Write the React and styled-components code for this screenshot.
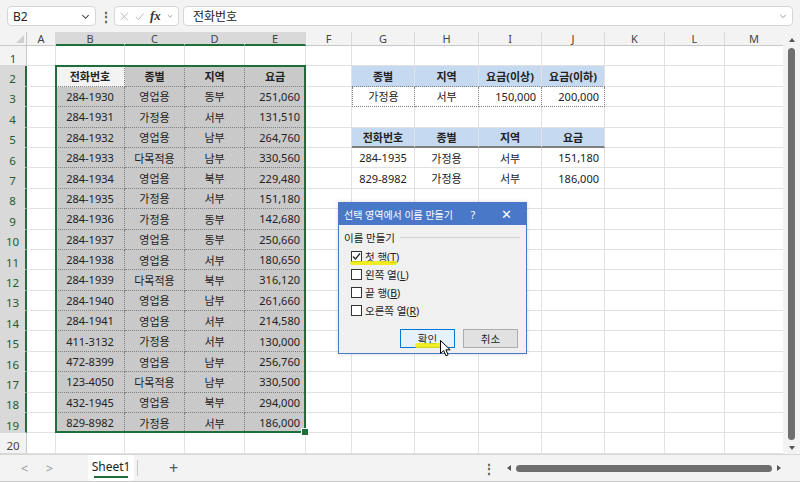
import React from "react";
import styled, { createGlobalStyle, css } from "styled-components";

const GlobalStyle = createGlobalStyle`
  html, body { margin: 0; padding: 0; background: #fff; }
  body { font-family: "Noto Sans", "Noto Sans CJK KR", sans-serif; color: #222; }
  * { box-sizing: border-box; }
`;

const COLS = ["", "A", "B", "C", "D", "E", "F", "G", "H", "I", "J", "K", "L", "M"];
const WIDTHS = [27, 29, 69, 60, 60, 61, 46, 63, 64, 63, 63, 60, 60, 59];
const ROW_H = 20.4;

const left = [
  ["284-1930", "영업용", "동부", "251,060"],
  ["284-1931", "가정용", "서부", "131,510"],
  ["284-1932", "영업용", "남부", "264,760"],
  ["284-1933", "다목적용", "남부", "330,560"],
  ["284-1934", "영업용", "북부", "229,480"],
  ["284-1935", "가정용", "서부", "151,180"],
  ["284-1936", "가정용", "동부", "142,680"],
  ["284-1937", "영업용", "동부", "250,660"],
  ["284-1938", "영업용", "서부", "180,650"],
  ["284-1939", "다목적용", "북부", "316,120"],
  ["284-1940", "영업용", "남부", "261,660"],
  ["284-1941", "영업용", "서부", "214,580"],
  ["411-3132", "가정용", "서부", "130,000"],
  ["472-8399", "영업용", "남부", "256,760"],
  ["123-4050", "다목적용", "남부", "330,500"],
  ["432-1945", "영업용", "북부", "294,000"],
  ["829-8982", "가정용", "서부", "186,000"],
];

// cell map: key "col,row" (col 1..13 = A..M, row 1..20)
const cells = {};
const put = (c, r, props) => { cells[`${c},${r}`] = props; };

["전화번호", "종별", "지역", "요금"].forEach((v, i) =>
  put(2 + i, 2, { v, bold: true, dotted: true, bg: i === 0 ? "#f3f3f3" : "#c9c9c9" })
);
left.forEach((row, ri) =>
  row.forEach((v, i) =>
    put(2 + i, 3 + ri, { v, dotted: true, bg: "#c9c9c9", align: i === 3 ? "right" : "center" })
  )
);

["종별", "지역", "요금(이상)", "요금(이하)"].forEach((v, i) =>
  put(7 + i, 2, { v, bold: true, bg: "#c5d9f1", dotBottom: true })
);
["가정용", "서부", "150,000", "200,000"].forEach((v, i) =>
  put(7 + i, 3, { v, dotted: true, dotLeft: i === 0, align: i >= 2 ? "right" : "center" })
);
["전화번호", "종별", "지역", "요금"].forEach((v, i) =>
  put(7 + i, 5, { v, bold: true, bg: "#c5d9f1", thick: true })
);
[
  ["284-1935", "가정용", "서부", "151,180"],
  ["829-8982", "가정용", "서부", "186,000"],
].forEach((row, ri) =>
  row.forEach((v, i) => put(7 + i, 6 + ri, { v, align: i === 3 ? "right" : "center" }))
);

const Page = styled.div`
  position: relative;
  width: 800px;
  height: 482px;
  overflow: hidden;
  display: flex;
  flex-direction: column;
  background: #f3f3f3;
`;

/* ---------- formula bar ---------- */
const FormulaBar = styled.div`
  height: 32px;
  display: flex;
  align-items: center;
  padding: 0 7px;
  gap: 4px;
  background: #f3f3f3;
`;
const FieldBox = styled.div`
  height: 20px;
  display: flex;
  align-items: center;
  background: #fff;
  border: 1px solid #d6d6d6;
  border-radius: 4px;
  font-size: 12px;
  color: #222;
  width: ${(p) => (p.$w ? `${p.$w}px` : "auto")};
  flex: ${(p) => (p.$grow ? 1 : "none")};
  padding: 0 5px;
  gap: 6px;
`;
const BoxText = styled.span`
  flex: 1;
  padding-left: ${(p) => p.$pl || 0}px;
`;
const VDots = styled.span`
  width: 10px;
  text-align: center;
  font-size: 12px;
  color: #555;
  font-weight: 700;
`;
const FxText = styled.span`
  font-family: "Liberation Serif", serif;
  font-style: italic;
  font-weight: 700;
  font-size: 13px;
  color: #333;
`;

const Chevron = ({ color = "#444", size = 9 }) => (
  <svg width={size} height={size} viewBox="0 0 10 10">
    <path d="M1.5 3.5 L5 7 L8.5 3.5" fill="none" stroke={color} strokeWidth="1.2" />
  </svg>
);

/* ---------- sheet ---------- */
const SheetArea = styled.div`
  display: flex;
  height: 422px;
`;
const Grid = styled.div`
  display: grid;
  grid-template-columns: ${WIDTHS.map((w) => `${w}px`).join(" ")};
  grid-template-rows: 14px repeat(20, ${ROW_H}px);
  background: #fff;
  font-size: 11px;
  overflow: hidden;
`;
const place = css`
  grid-column: ${(p) => p.$c + 1};
  grid-row: ${(p) => p.$r + 1};
`;
const ColHead = styled.div`
  ${place}
  display: flex;
  align-items: center;
  justify-content: center;
  font-size: 11px;
  line-height: 11px;
  color: #444;
  background: ${(p) => (p.$sel ? "#d9d9d9" : "#f3f3f3")};
  border-right: 1px solid #d9d9d9;
  border-bottom: ${(p) => (p.$sel ? "2px solid #1e6e3c" : "1px solid #c8c8c8")};
  position: relative;
`;
const Corner = styled(ColHead)`
  border-right: 1px solid #c8c8c8;
  &::after {
    content: "";
    position: absolute;
    right: 2px;
    bottom: 2px;
    border-left: 8px solid transparent;
    border-bottom: 8px solid #cfcfcf;
  }
`;
const RowHead = styled.div`
  ${place}
  display: flex;
  align-items: center;
  justify-content: center;
  padding-top: 5px;
  font-size: 11.5px;
  color: #444;
  background: ${(p) => (p.$sel ? "#d9d9d9" : "#f3f3f3")};
  border-bottom: 1px solid #d9d9d9;
  border-right: ${(p) => (p.$sel ? "2px solid #1e6e3c" : "1px solid #c8c8c8")};
  ${(p) => p.$sel && css`color: #1e5a32;`}
`;
const Cell = styled.div`
  ${place}
  display: flex;
  align-items: center;
  justify-content: ${(p) =>
    p.$align === "right" ? "flex-end" : p.$align === "left" ? "flex-start" : "center"};
  padding: 0 5px;
  white-space: nowrap;
  overflow: hidden;
  font-weight: ${(p) => (p.$bold ? 700 : 400)};
  background: ${(p) => p.$bg || "#fff"};
  border-right: 1px solid #e1e1e1;
  border-bottom: 1px solid #e1e1e1;
  ${(p) => p.$dotted && css`
    border-right: 1px dotted #808080;
    border-bottom: 1px dotted #808080;
  `}
  ${(p) => p.$dotBottom && css`border-bottom: 1px dotted #808080;`}
  ${(p) => p.$dotLeft && css`border-left: 1px dotted #808080;`}
  ${(p) => p.$thick && css`border-bottom: 2px solid #7f7f7f;`}
`;
const Selection = styled.div`
  grid-column: 3 / 7;
  grid-row: 3 / 21;
  margin: -1px 0 0 -1px;
  border: 2px solid #1e6e3c;
  pointer-events: none;
  position: relative;
  z-index: 2;
  &::after {
    content: "";
    position: absolute;
    right: -5px;
    bottom: -5px;
    width: 6px;
    height: 6px;
    background: #1e6e3c;
    border: 1px solid #fff;
  }
`;

const VScroll = styled.div`
  width: 17px;
  display: flex;
  flex-direction: column;
  align-items: center;
  padding: 4px 0 2px;
  gap: 4px;
  background: #f3f3f3;
`;
const VThumb = styled.div`
  flex: 1;
  width: 7px;
  border-radius: 4px;
  background: #6e6e6e;
`;

/* ---------- tab bar ---------- */
const TabBar = styled.div`
  height: 28px;
  display: flex;
  align-items: center;
  background: #f3f3f3;
  border-top: 1px solid #d6d6d6;
  border-bottom: 1px solid #c8c8c8;
  font-size: 12px;
`;
const NavArrow = styled.span`
  width: 25px;
  text-align: center;
  color: #999;
  font-size: 13px;
  margin-left: ${(p) => p.$ml || 0}px;
`;
const Tab = styled.div`
  margin-left: 26px;
  width: 46px;
  height: 26px;
  margin-top: -1px;
  background: #fff;
  border-radius: 0 0 4px 4px;
  display: flex;
  flex-direction: column;
  align-items: center;
  justify-content: center;
  color: #222;
  gap: 1px;
`;
const TabLine = styled.div`
  width: 34px;
  height: 2px;
  background: #1e6e3c;
`;
const TabSep = styled.div`
  width: 1px;
  height: 16px;
  background: #c8c8c8;
  margin-left: 3px;
`;
const Plus = styled.span`
  margin-left: 31px;
  font-size: 16px;
  color: #555;
`;
const HScroll = styled.div`
  margin-left: auto;
  margin-right: 17px;
  width: 300px;
  display: flex;
  align-items: center;
  gap: 3px;
`;
const Spacer = styled.span`
  width: ${(p) => p.$w}px;
`;
const HThumb = styled.div`
  flex: 1;
  height: 7px;
  border-radius: 4px;
  background: #6e6e6e;
`;

const Tri = ({ dir }) => {
  const d = {
    up: "M1 6 L4 2 L7 6 Z",
    down: "M1 2 L4 6 L7 2 Z",
    left: "M6 1 L2 4 L6 7 Z",
    right: "M2 1 L6 4 L2 7 Z",
  }[dir];
  return (
    <svg width="8" height="8" viewBox="0 0 8 8">
      <path d={d} fill="#555" />
    </svg>
  );
};

/* ---------- dialog ---------- */
const Dialog = styled.div`
  position: absolute;
  left: 338px;
  top: 202px;
  width: 189px;
  height: 152px;
  background: #f0f0f0;
  border: 1px solid #4a78c8;
  display: flex;
  flex-direction: column;
  z-index: 5;
  box-shadow: 0 0 4px rgba(0, 0, 0, 0.15);
`;
const TitleBar = styled.div`
  height: 22px;
  background: #4a78c8;
  color: #fff;
  display: flex;
  align-items: center;
  padding-left: 5px;
  font-size: 10px;
  white-space: nowrap;
`;
const TitleText = styled.span`
  flex: 1;
`;
const TitleBtn = styled.span`
  width: ${(p) => p.$w}px;
  text-align: center;
  font-size: ${(p) => p.$fs || 11}px;
`;
const DialogBody = styled.div`
  flex: 1;
  padding: 5px 6px 0 5px;
  display: flex;
  flex-direction: column;
  font-size: 10.5px;
  color: #222;
`;
const GroupLabel = styled.div`
  display: flex;
  align-items: center;
  gap: 5px;
  &::after {
    content: "";
    flex: 1;
    height: 1px;
    background: #d4d4d4;
  }
`;
const Options = styled.div`
  display: flex;
  flex-direction: column;
  gap: 3px;
  padding: 4px 0 0 7px;
`;
const Option = styled.div`
  height: 15px;
  display: flex;
  align-items: center;
  gap: 3px;
`;
const CheckBox = styled.span`
  width: 11px;
  height: 11px;
  border: 1px solid #333;
  background: #fff;
  display: inline-flex;
  align-items: center;
  justify-content: center;
`;
const Buttons = styled.div`
  margin-top: auto;
  margin-bottom: 5px;
  display: flex;
  justify-content: flex-end;
  gap: 8px;
  padding-right: 2px;
`;
const Button = styled.div`
  width: 55px;
  height: 19px;
  display: flex;
  align-items: center;
  justify-content: center;
  font-size: 10.5px;
  background: ${(p) => (p.$primary ? "#e5f1fb" : "#e1e1e1")};
  border: 1px solid ${(p) => (p.$primary ? "#0078d7" : "#adadad")};
`;
const Marker = styled.div`
  position: absolute;
  background: rgba(240, 236, 0, 0.85);
  border-radius: 2px;
  z-index: 6;
`;
const Cursor = styled.svg`
  position: absolute;
  left: 440px;
  top: 340px;
  z-index: 7;
`;

const Check = () => (
  <svg width="9" height="9" viewBox="0 0 9 9">
    <path d="M1 4.5 L3.5 7 L8 1.5" fill="none" stroke="#222" strokeWidth="1.3" />
  </svg>
);

const options = [
  ["첫 행(", "T", ")", true],
  ["왼쪽 열(", "L", ")", false],
  ["끝 행(", "B", ")", false],
  ["오른쪽 열(", "R", ")", false],
];

export default function App() {
  const gridItems = [];
  COLS.forEach((c, ci) => {
    const sel = ci >= 2 && ci <= 5;
    gridItems.push(
      ci === 0 ? (
        <Corner key={`h${ci}`} $c={0} $r={0} />
      ) : (
        <ColHead key={`h${ci}`} $c={ci} $r={0} $sel={sel}>{c}</ColHead>
      )
    );
  });
  for (let r = 1; r <= 20; r++) {
    gridItems.push(
      <RowHead key={`r${r}`} $c={0} $r={r} $sel={r >= 2 && r <= 19}>{r}</RowHead>
    );
    for (let c = 1; c <= 13; c++) {
      const p = cells[`${c},${r}`] || {};
      gridItems.push(
        <Cell
          key={`${c},${r}`}
          $c={c}
          $r={r}
          $bg={p.bg}
          $bold={p.bold}
          $align={p.align}
          $dotted={p.dotted}
          $dotBottom={p.dotBottom}
          $dotLeft={p.dotLeft}
          $thick={p.thick}
        >
          {p.v}
        </Cell>
      );
    }
  }

  return (
    <Page>
      <GlobalStyle />
      <FormulaBar>
        <FieldBox $w={89}>
          <BoxText>B2</BoxText>
          <Chevron />
        </FieldBox>
        <VDots>⋮</VDots>
        <FieldBox $w={65}>
          <svg width="11" height="11" viewBox="0 0 11 11">
            <path d="M1 1 L10 10 M10 1 L1 10" stroke="#b0b0b0" strokeWidth="1.1" />
          </svg>
          <svg width="12" height="11" viewBox="0 0 12 11">
            <path d="M1 6 L4.5 9.5 L11 1.5" fill="none" stroke="#b0b0b0" strokeWidth="1.1" />
          </svg>
          <FxText>fx</FxText>
          <Chevron color="#888" size={8} />
        </FieldBox>
        <FieldBox $grow>
          <BoxText $pl={4}>전화번호</BoxText>
          <Chevron color="#999" size={8} />
        </FieldBox>
      </FormulaBar>

      <SheetArea>
        <Grid>
          {gridItems}
          <Selection />
        </Grid>
        <VScroll>
          <Tri dir="up" />
          <VThumb />
          <Tri dir="down" />
        </VScroll>
      </SheetArea>

      <TabBar>
        <NavArrow $ml={12}>&lt;</NavArrow>
        <NavArrow>&gt;</NavArrow>
        <Tab>
          <span>Sheet1</span>
          <TabLine />
        </Tab>
        <TabSep />
        <Plus>+</Plus>
        <HScroll>
          <VDots>⋮</VDots>
          <Spacer $w={6} />
          <Tri dir="left" />
          <HThumb />
          <Tri dir="right" />
        </HScroll>
      </TabBar>

      <Dialog>
        <TitleBar>
          <TitleText>선택 영역에서 이름 만들기</TitleText>
          <TitleBtn $w={26}>?</TitleBtn>
          <TitleBtn $w={40} $fs={13}>✕</TitleBtn>
        </TitleBar>
        <DialogBody>
          <GroupLabel>이름 만들기</GroupLabel>
          <Options>
            {options.map(([a, k, b, on]) => (
              <Option key={k}>
                <CheckBox>{on && <Check />}</CheckBox>
                <span>
                  {a}
                  <u>{k}</u>
                  {b}
                </span>
              </Option>
            ))}
          </Options>
          <Buttons>
            <Button $primary>확인</Button>
            <Button>취소</Button>
          </Buttons>
        </DialogBody>
      </Dialog>

      <Marker style={{ left: 350, top: 261, width: 47, height: 4 }} />
      <Marker style={{ left: 415, top: 343, width: 27, height: 5 }} />
      <Cursor width="12" height="17" viewBox="0 0 12 17">
        <path
          d="M0.5 0.5 L0.5 13.5 L3.7 10.6 L6 15.8 L8.1 14.9 L5.9 9.8 L10.2 9.8 Z"
          fill="#fff"
          stroke="#000"
          strokeWidth="1"
        />
      </Cursor>
    </Page>
  );
}
